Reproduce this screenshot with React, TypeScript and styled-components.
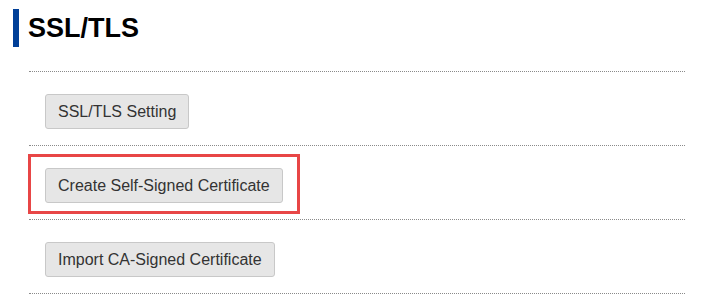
import { createGlobalStyle } from 'styled-components';
import styled from 'styled-components';

const GlobalStyle = createGlobalStyle`
  body {
    margin: 0;
    background: #fff;
    font-family: "Liberation Sans", Arial, sans-serif;
  }
`;

const Page = styled.div`
  padding: 9px 16px 0 13px;
`;

const Heading = styled.h1`
  display: flex;
  align-items: center;
  height: 38px;
  margin: 0;
  padding-left: 9px;
  border-left: 6px solid #003f98;
  font-size: 27px;
  font-weight: bold;
  color: #000;
`;

const MenuList = styled.ul`
  list-style: none;
  margin: 24px 0 0 16px;
  padding: 0;
  width: 656px;
  border-bottom: 1px dotted #8a8a8a;
`;

const MenuItem = styled.li`
  border-top: 1px dotted #8a8a8a;
  padding: 22px 16px 16px;
`;

const ButtonWrap = styled.div`
  position: relative;
  display: inline-block;
  vertical-align: top;
`;

const Highlight = styled.span`
  position: absolute;
  left: -17px;
  right: -17px;
  top: -14px;
  bottom: -11px;
  border: 3px solid #e84646;
  pointer-events: none;
`;

const Button = styled.button`
  height: 35px;
  padding: 0 12px;
  border: 1px solid #c8c8c8;
  border-radius: 3px;
  background: #e6e6e6;
  color: #333;
  font-family: "Liberation Sans", Arial, sans-serif;
  font-size: 16px;
  cursor: pointer;
`;

interface IMenu {
  label: string,
  highlight?: boolean,
}

const menus: IMenu[] = [
  { label: 'SSL/TLS Setting' },
  { label: 'Create Self-Signed Certificate', highlight: true },
  { label: 'Import CA-Signed Certificate' },
];

const App = () => {
  return (
    <Page>
      <GlobalStyle />
      <Heading>SSL/TLS</Heading>
      <MenuList>
        {
          menus.map((menu) => (
            <MenuItem key={menu.label}>
              <ButtonWrap>
                <Button>{menu.label}</Button>
                {menu.highlight && <Highlight />}
              </ButtonWrap>
            </MenuItem>
          ))
        }
      </MenuList>
    </Page>
  )
}

export default App;
